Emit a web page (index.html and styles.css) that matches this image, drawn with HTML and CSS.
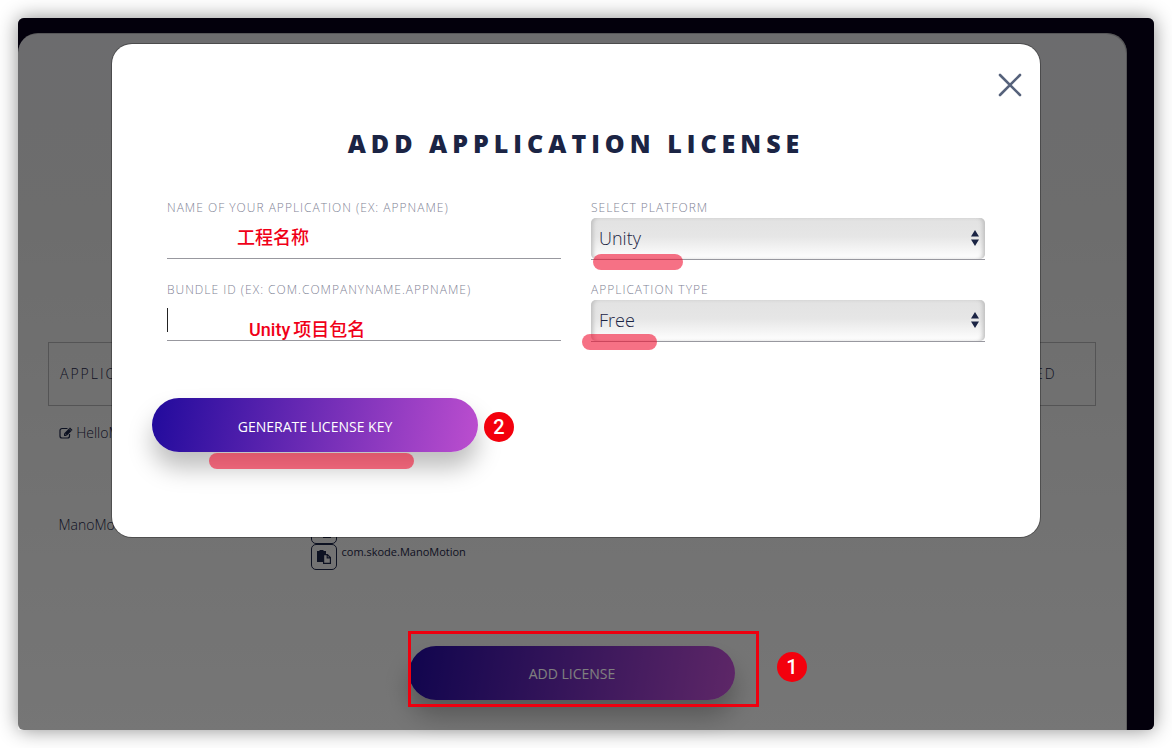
FILE: index.html
```html
<!DOCTYPE html>
<html lang="en">
<head>
  <meta charset="UTF-8" />
  <meta name="viewport" content="width=device-width, initial-scale=1" />
  <title>Add Application License</title>
  <link rel="stylesheet" href="styles.css">
</head>
<body>
  <div class="frame">
    <main class="panel">
      <table class="licenses">
        <thead>
          <tr>
            <th class="col-app">APPLICATION</th>
            <th>BUNDLE ID</th>
            <th class="col-date">CREATED</th>
          </tr>
        </thead>
        <tbody>
          <tr>
            <td>
              <svg class="edit-icon" viewBox="0 0 14 12" aria-hidden="true">
                <path d="M8.5 1.5H3A2 2 0 0 0 1 3.500V9a2 2 0 0 0 2 2h5.500a2 2 0 0 0 2-2V7" fill="none" stroke="currentColor" stroke-width="1.200"/>
                <path d="M5 9V6.500L11 .6l2.500 2.500L7.500 9z" fill="currentColor"/>
                <path d="M6 6.800L7.800 8.500M10 1.500l2.500 2.500" stroke="#d8d8d8" stroke-width=".6"/>
              </svg>
              HelloMano
            </td>
            <td></td>
            <td></td>
          </tr>
          <tr>
            <td>ManoMotion</td>
            <td class="ids">
              <div class="id-row">
                <button class="copy" aria-label="Copy license key">
                  <svg viewBox="0 0 14 14"><path d="M0 1h2.500V0h4v1H9v3H6v8H0z" fill="currentColor"/><path d="M6.600 4.600h3.800l3 3v5.800H6.600zM10.200 4.600v3.200h3.200" fill="none" stroke="currentColor" stroke-width="1.200"/></svg>
                </button>
              </div>
              <div class="id-row">
                <button class="copy" aria-label="Copy bundle ID">
                  <svg viewBox="0 0 14 14"><path d="M0 1h2.500V0h4v1H9v3H6v8H0z" fill="currentColor"/><path d="M6.600 4.600h3.800l3 3v5.800H6.600zM10.200 4.600v3.200h3.200" fill="none" stroke="currentColor" stroke-width="1.200"/></svg>
                </button>
                <span>com.skode.ManoMotion</span>
              </div>
            </td>
            <td></td>
          </tr>
        </tbody>
      </table>

      <div class="add-row">
        <button class="btn">ADD LICENSE</button>
        <span class="outline"></span>
        <span class="badge badge-one">1</span>
      </div>
    </main>

    <div class="overlay">
      <div class="modal" role="dialog" aria-labelledby="title">
        <button class="close" aria-label="Close">
          <svg viewBox="0 0 24 24"><path d="M2 2l20 20M22 2L2 22" fill="none" stroke="#56627b" stroke-width="2.600" stroke-linecap="round"/></svg>
        </button>
        <h1 id="title">ADD APPLICATION LICENSE</h1>

        <form>
          <div class="fields">
            <div class="field">
              <label for="app-name">NAME OF YOUR APPLICATION (EX: APPNAME)</label>
              <input type="text" id="app-name">
              <span class="note note-name">工程名称</span>
            </div>
            <div class="field">
              <label for="platform">SELECT PLATFORM</label>
              <div class="select">
                <select id="platform">
                  <option>Unity</option>
                </select>
                <svg class="arrows" viewBox="0 0 8 16"><path d="M4 0l4 6.500H0zM0 9.500h8L4 16z" fill="#1b2444"/></svg>
              </div>
              <span class="marker marker-platform"></span>
            </div>
            <div class="field">
              <label for="bundle-id">BUNDLE ID (EX: COM.COMPANYNAME.APPNAME)</label>
              <input type="text" id="bundle-id">
              <span class="caret"></span>
              <span class="note note-bundle"><span>Unity</span><span>项目包名</span></span>
            </div>
            <div class="field">
              <label for="app-type">APPLICATION TYPE</label>
              <div class="select">
                <select id="app-type">
                  <option>Free</option>
                </select>
                <svg class="arrows" viewBox="0 0 8 16"><path d="M4 0l4 6.500H0zM0 9.500h8L4 16z" fill="#1b2444"/></svg>
              </div>
              <span class="marker marker-type"></span>
            </div>
          </div>

          <div class="actions">
            <button type="button" class="btn">GENERATE LICENSE KEY</button>
            <span class="marker marker-generate"></span>
            <span class="badge">2</span>
          </div>
        </form>
      </div>
    </div>
  </div>
</body>
</html>
```
FILE: styles.css
```css
* {
  box-sizing: border-box;
}

body {
  margin: 0;
  padding: 18px;
  background: #ffffff;
  font-family: "Open Sans", "Noto Sans CJK SC", sans-serif;
  color: #1b2444;
}

button {
  padding: 0;
  border: none;
  background: none;
  color: inherit;
  font-family: inherit;
  cursor: pointer;
}

.frame {
  position: relative;
  padding: 15px 27px 0 0;
  background: #060018;
  border-radius: 6px;
  box-shadow: 0 0 20px rgba(0, 0, 0, 0.45);
}

/* page behind the dialog */
.panel {
  padding: 309px 31px 30px 30px;
  background: linear-gradient(#d8d8dc, #dadada 25%, #ececec);
  border-radius: 20px 20px 0 0;
  box-shadow: inset -1px 1px 0 rgba(0, 0, 0, 0.2);
}

.licenses {
  width: 100%;
  table-layout: fixed;
  border-collapse: collapse;
  font-size: 14px;
  line-height: 20px;
}

.licenses thead {
  border: 1px solid #a8a8aa;
}

.licenses th {
  height: 63px;
  padding: 0 11px;
  font-weight: 300;
  letter-spacing: 2px;
  text-align: left;
}

.licenses td {
  height: 92px;
  padding: 17px 10px;
  font-weight: 300;
  vertical-align: top;
}

.licenses td.ids {
  padding: 20px 10px;
  font-weight: 400;
}

.col-app {
  width: 252px;
}

.col-date {
  width: 122px;
}

.edit-icon {
  width: 14px;
  height: 12px;
  vertical-align: -1px;
}

.id-row {
  display: flex;
  gap: 5px;
  font-size: 11px;
  line-height: 16px;
}

.copy {
  display: flex;
  align-items: center;
  justify-content: center;
  width: 26px;
  height: 26px;
  border: 1px solid #1b2444;
  border-radius: 5px;
}

.copy svg {
  width: 14px;
  height: 14px;
}

.add-row {
  position: relative;
  width: 326px;
  margin: 56px auto 0;
}

.btn {
  width: 326px;
  height: 54px;
  padding-top: 2px;
  border-radius: 27px;
  background: linear-gradient(100deg, #210a9c, #bc4ecf);
  box-shadow: 0 16px 24px rgba(0, 0, 0, 0.26);
  color: #ffffff;
  font-size: 14px;
  font-weight: 500;
  display: block;
}

/* dialog */
.overlay {
  position: absolute;
  inset: 0;
  z-index: 1;
  padding: 26px 114px 0 94px;
  background: rgba(0, 0, 0, 0.5);
  border-radius: 6px;
}

.modal {
  position: relative;
  padding: 81px 40px 85px;
  background: #ffffff;
  border-radius: 20px;
  box-shadow: 0 0 0 1px rgba(0, 0, 0, 0.3);
}

.close {
  position: absolute;
  top: 29px;
  right: 18px;
  width: 24px;
  height: 24px;
}

.close svg {
  display: block;
}

h1 {
  margin: 0 0 37px;
  font-size: 25px;
  line-height: 36px;
  font-weight: 800;
  letter-spacing: 5px;
  text-align: center;
}

.fields {
  display: grid;
  grid-template-columns: 1fr 1fr;
  gap: 20px 30px;
  padding: 0 15px;
}

.field {
  position: relative;
}

.field label {
  display: block;
  font-size: 12px;
  line-height: 20px;
  font-weight: 300;
  letter-spacing: 1px;
  color: #7f8496;
}

.field input {
  display: block;
  width: 100%;
  height: 41px;
  padding: 0;
  border: none;
  border-bottom: 1px solid #98989f;
  background: none;
  font: 300 18px "Open Sans", sans-serif;
  outline: none;
}

.select {
  position: relative;
  border-bottom: 1px solid #98989f;
}

.select select {
  display: block;
  width: 100%;
  height: 41px;
  padding: 0 8px 2px;
  border: none;
  border-radius: 5px;
  appearance: none;
  background: linear-gradient(#e2e2e2, #e6e6e6 45%, #ffffff);
  box-shadow: inset 4px 0 4px -2px #bdbdbd, inset -4px 0 4px -2px #bdbdbd;
  color: #1b2444;
  font: 300 18px "Open Sans", sans-serif;
}

.arrows {
  position: absolute;
  top: 12px;
  right: 6px;
  width: 8px;
  height: 16px;
  pointer-events: none;
}

.caret {
  position: absolute;
  left: 0;
  top: 28px;
  width: 1px;
  height: 24px;
  background: #222222;
}

.actions {
  position: relative;
  display: flex;
  align-items: center;
  gap: 6px;
  margin-top: 56px;
}

/* red notes */
.note {
  position: absolute;
  display: flex;
  gap: 3px;
  font-family: Roboto, "Noto Sans CJK SC", sans-serif;
  font-size: 18px;
  line-height: 26px;
  font-weight: 500;
  color: #f00018;
}

.note-name {
  left: 70px;
  top: 27px;
}

.note-bundle {
  left: 82px;
  top: 37px;
}

.marker {
  position: absolute;
  height: 16px;
  border-radius: 8px;
  background: rgba(240, 10, 45, 0.58);
}

.marker-platform {
  left: 2px;
  top: 56px;
  width: 90px;
}

.marker-type {
  left: -9px;
  top: 54px;
  width: 75px;
}

.marker-generate {
  left: 57px;
  top: 55px;
  width: 205px;
}

.outline {
  position: absolute;
  z-index: 2;
  left: -1px;
  top: -15px;
  width: 351px;
  height: 76px;
  border: 3px solid #ee000f;
}

.badge {
  width: 30px;
  height: 30px;
  margin-top: 4px;
  border-radius: 50%;
  background: #f3000d;
  color: #ffffff;
  font: 500 20px/30px Roboto, sans-serif;
  text-align: center;
}

.badge-one {
  position: absolute;
  z-index: 2;
  left: 368px;
  top: 2px;
}
```
